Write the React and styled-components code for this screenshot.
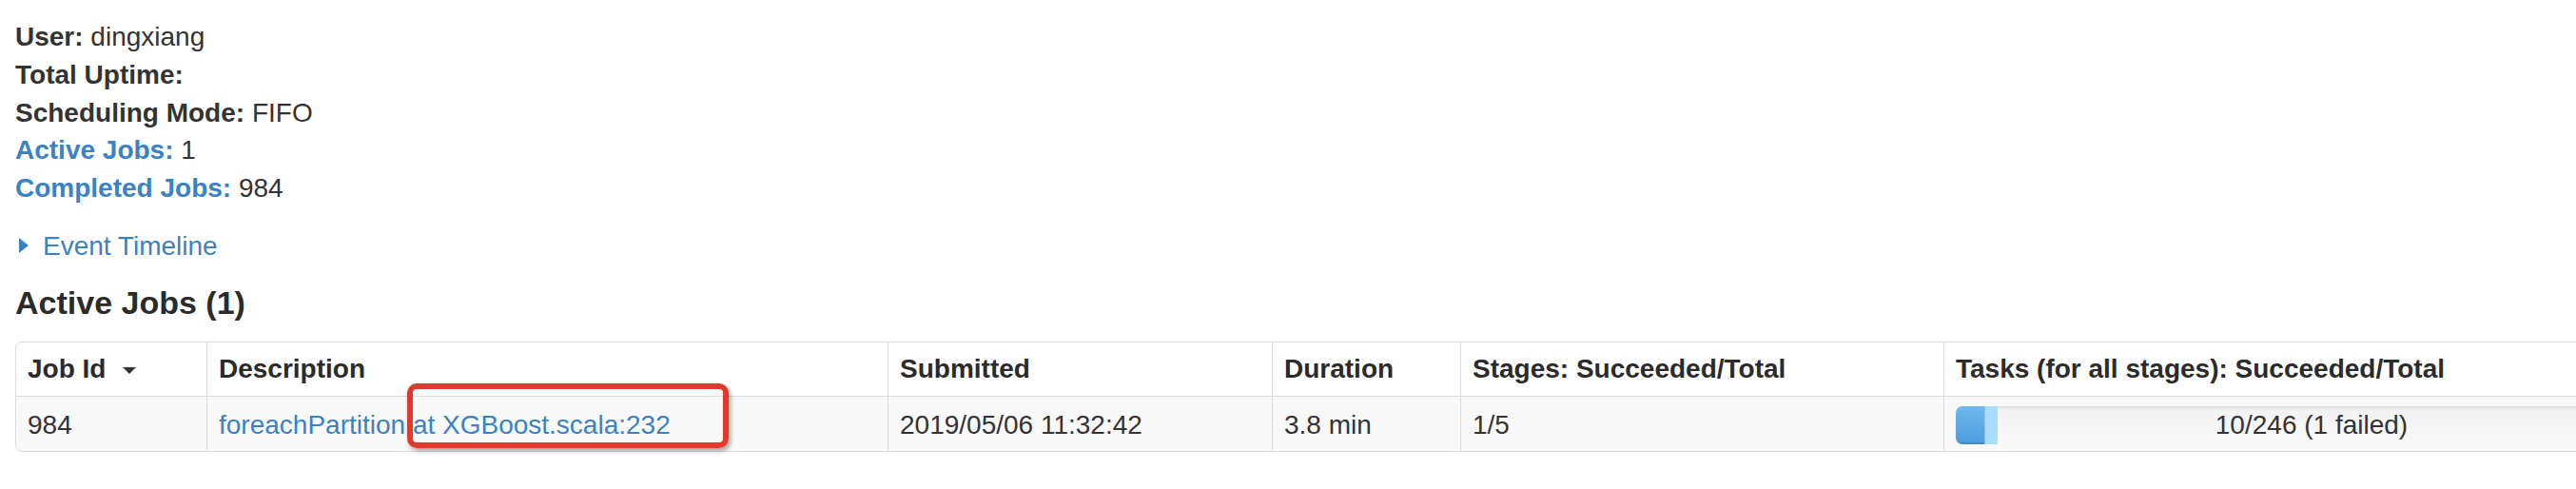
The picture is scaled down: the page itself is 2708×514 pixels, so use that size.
import styled, { createGlobalStyle } from 'styled-components';

const GlobalStyle = createGlobalStyle`
  html, body {
    margin: 0;
    padding: 0;
    background: #fff;
    overflow: hidden;
  }
  body {
    font-family: "Liberation Sans", Helvetica, Arial, sans-serif;
    font-size: 28px;
    color: #333;
  }
`;

const LINK = '#3a82c4';

const jobs = [
  {
    id: 984,
    name: 'foreachPartition',
    callSite: 'at XGBoost.scala:232',
    submitted: '2019/05/06 11:32:42',
    duration: '3.8 min',
    stages: '1/5',
    completed: 10,
    running: 4,
    total: 246,
    failed: 1,
  },
];

/**
 * Spark jobs page (active jobs only)
 */
export default function App() {
  return (
    <Page>
      <GlobalStyle />
      <Summary>
        <li>
          <Label>User:</Label> dingxiang
        </li>
        <li>
          <Label>Total Uptime:</Label>
        </li>
        <li>
          <Label>Scheduling Mode:</Label> FIFO
        </li>
        <li>
          <LinkLabel href="#active">Active Jobs:</LinkLabel> 1
        </li>
        <li>
          <LinkLabel href="#completed">Completed Jobs:</LinkLabel> 984
        </li>
      </Summary>

      <Timeline>
        <ArrowClosed />
        <TimelineLink href="#timeline">Event Timeline</TimelineLink>
      </Timeline>

      <Heading id="active">Active Jobs ({jobs.length})</Heading>

      <JobsTable>
        <colgroup>
          <col style={{ width: 200 }} />
          <col style={{ width: 716 }} />
          <col style={{ width: 404 }} />
          <col style={{ width: 198 }} />
          <col style={{ width: 508 }} />
          <col style={{ width: 773 }} />
        </colgroup>
        <thead>
          <tr>
            <Th>
              Job Id <SortArrow />
            </Th>
            <Th>Description</Th>
            <Th>Submitted</Th>
            <Th>Duration</Th>
            <Th>Stages: Succeeded/Total</Th>
            <Th>Tasks (for all stages): Succeeded/Total</Th>
          </tr>
        </thead>
        <tbody>
          {jobs.map((job) => (
            <tr key={job.id}>
              <Td>{job.id}</Td>
              <Td>
                <DescLink href="#job">
                  {job.name}{' '}
                  <CallSite>
                    {job.callSite}
                    {/* red annotation box drawn over the screenshot */}
                    <Highlight />
                  </CallSite>
                </DescLink>
              </Td>
              <Td>{job.submitted}</Td>
              <Td>{job.duration}</Td>
              <Td>{job.stages}</Td>
              <Td>
                <Progress>
                  <ProgressText>
                    {job.completed}/{job.total} ({job.failed} failed)
                  </ProgressText>
                  <BarCompleted style={{ width: `${(job.completed / job.total) * 100}%` }} />
                  <BarRunning style={{ width: `${(job.running / job.total) * 100}%` }} />
                </Progress>
              </Td>
            </tr>
          ))}
        </tbody>
      </JobsTable>
    </Page>
  );
}

const Page = styled.div`
  padding: 19px 0 0 16px;
  height: 514px;
  box-sizing: border-box;
`;

const Summary = styled.ul`
  list-style: none;
  margin: 0;
  padding: 0;
  line-height: 39.75px;
`;

const Label = styled.strong`
  font-weight: 700;
`;

const LinkLabel = styled.a`
  font-weight: 700;
  color: ${LINK};
  text-decoration: none;
`;

const Timeline = styled.div`
  display: flex;
  align-items: center;
  margin-top: 21px;
  height: 40px;
  padding-left: 4px;
`;

const ArrowClosed = styled.span`
  display: inline-block;
  width: 0;
  height: 0;
  border-top: 8.5px solid transparent;
  border-bottom: 8.5px solid transparent;
  border-left: 10px solid ${LINK};
  margin: -2px 15px 0 0;
`;

const TimelineLink = styled.a`
  color: ${LINK};
  text-decoration: none;
  line-height: 40px;
`;

const Heading = styled.h4`
  margin: 19px 0 0;
  font-size: 34px;
  line-height: 40px;
  font-weight: 700;
  color: #2b2b2b;
`;

const JobsTable = styled.table`
  margin-top: 21px;
  table-layout: fixed;
  width: 2799px;
  border-collapse: separate;
  border-spacing: 0;
  border: 1px solid #dcdcdc;
  border-radius: 7px;
`;

const Th = styled.th`
  text-align: left;
  font-weight: 700;
  color: #2b2b2b;
  padding: 11px 12px;
  line-height: 34px;
  white-space: nowrap;
  & + & {
    border-left: 1px solid #dcdcdc;
  }
`;

const Td = styled.td`
  padding: 10px 12px 7px;
  line-height: 40px;
  white-space: nowrap;
  background: #f9f9f9;
  border-top: 1px solid #dcdcdc;
  & + & {
    border-left: 1px solid #dcdcdc;
  }
  tr:last-child > &:first-child {
    border-bottom-left-radius: 7px;
  }
`;

const SortArrow = styled.span`
  display: inline-block;
  width: 0;
  height: 0;
  border-left: 7.5px solid transparent;
  border-right: 7.5px solid transparent;
  border-top: 7px solid #333;
  margin-left: 10px;
  vertical-align: middle;
`;

const DescLink = styled.a`
  color: ${LINK};
  text-decoration: none;
`;

const CallSite = styled.span`
  position: relative;
`;

const Highlight = styled.span`
  position: absolute;
  left: -6px;
  right: -61px;
  top: -28px;
  bottom: -9px;
  border: 6px solid #e2392d;
  border-radius: 10px;
  box-shadow: 2px 3px 5px rgba(0, 0, 0, 0.35);
  pointer-events: none;
`;

const Progress = styled.div`
  position: relative;
  display: flex;
  height: 40px;
  border-radius: 7px;
  overflow: hidden;
  background-image: linear-gradient(to bottom, #f2f2f2, #f9f9f9);
  box-shadow: inset 0 2px 3px rgba(0, 0, 0, 0.1);
`;

const ProgressText = styled.span`
  position: absolute;
  inset: 0;
  text-align: center;
  line-height: 40px;
  color: #333;
`;

const BarCompleted = styled.div`
  height: 100%;
  background-image: linear-gradient(to bottom, #6fb9ef, #4d9bdc);
  box-shadow: inset 0 -2px 0 rgba(0, 0, 0, 0.12);
`;

const BarRunning = styled.div`
  height: 100%;
  background: #a9ddfb;
  border-left: 1px solid #8cc4ea;
`;
